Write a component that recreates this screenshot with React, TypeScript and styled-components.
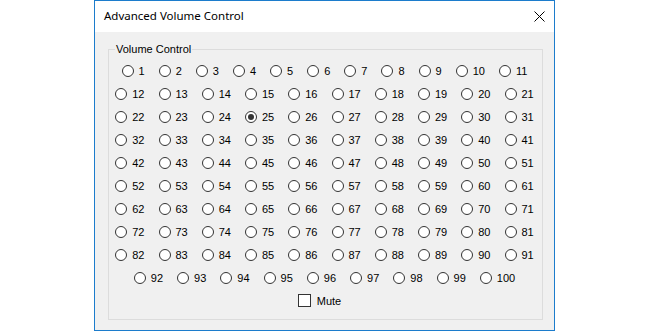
import React, { useState } from 'react'
import styled, { createGlobalStyle } from 'styled-components'

const GlobalStyle = createGlobalStyle`
  html, body {
    margin: 0;
    padding: 0;
    background: #ffffff;
  }
  body {
    width: 650px;
    height: 332px;
    overflow: hidden;
    font-family: "Liberation Sans", Arial, sans-serif;
  }
`

const buildRows = (): number[][] => {
  const rows: number[][] = []
  rows.push(Array.from({ length: 11 }, (_, i) => i + 1))
  for (let start = 12; start < 92; start += 10) {
    rows.push(Array.from({ length: 10 }, (_, i) => start + i))
  }
  rows.push(Array.from({ length: 9 }, (_, i) => 92 + i))
  return rows
}

const rows = buildRows()

const App: React.FC = () => {
  const [volume, setVolume] = useState(25)
  const [muted, setMuted] = useState(false)

  return (
    <>
      <GlobalStyle />
      <Page>
        <Window>
          <TitleBar>
            <Title>Advanced Volume Control</Title>
            <CloseButton aria-label="Close">
              <svg width="11" height="11" viewBox="0 0 11 11">
                <path d="M0.5 0.5 L10.5 10.5 M10.5 0.5 L0.5 10.5" stroke="#000" strokeWidth="1" fill="none" />
              </svg>
            </CloseButton>
          </TitleBar>
          <Body>
            <GroupBox>
              <Legend>Volume Control</Legend>
              <RadioGrid>
                {rows.map((row, r) => (
                  <RadioRow key={r}>
                    {row.map((n) => (
                      <RadioItem key={n} onClick={() => setVolume(n)}>
                        <RadioCircle $checked={volume === n} />
                        <ItemText>{n}</ItemText>
                      </RadioItem>
                    ))}
                  </RadioRow>
                ))}
              </RadioGrid>
              <MuteRow>
                <CheckItem onClick={() => setMuted(!muted)}>
                  <CheckBox $checked={muted} />
                  <ItemText>Mute</ItemText>
                </CheckItem>
              </MuteRow>
            </GroupBox>
          </Body>
        </Window>
      </Page>
    </>
  )
}

const Page = styled.div`
  display: flex;
  padding-left: 94px;
  height: 332px;
  box-sizing: border-box;
`

const Window = styled.div`
  width: 461px;
  height: 331px;
  box-sizing: border-box;
  border: 1px solid #1c7ccc;
  background: #f0f0f0;
  display: flex;
  flex-direction: column;
`

const TitleBar = styled.div`
  height: 31px;
  flex: none;
  background: #ffffff;
  display: flex;
  align-items: center;
  padding-left: 9px;
`

const Title = styled.div`
  flex: 1;
  font-family: "Segoe UI", "Noto Sans", sans-serif;
  font-size: 11.5px;
  line-height: 14px;
  margin-top: -2px;
  color: #000;
`

const CloseButton = styled.div`
  width: 30px;
  height: 31px;
  display: flex;
  align-items: center;
  justify-content: center;
`

const Body = styled.div`
  flex: 1;
  display: flex;
  padding: 10px 11px 10px 13px;
  min-height: 0;
`

const GroupBox = styled.fieldset`
  flex: 1;
  margin: 0;
  padding: 0 0 6px;
  min-width: 0;
  border: 1px solid #dcdcdc;
  display: flex;
  flex-direction: column;
`

const Legend = styled.legend`
  margin-left: 6px;
  padding: 0 1px;
  font-size: 11px;
  line-height: 14px;
  color: #000;
`

const RadioGrid = styled.div`
  display: flex;
  flex-direction: column;
  padding-top: 3px;
`

const RadioRow = styled.div<{ $first?: boolean }>`
  display: flex;
  justify-content: center;
  height: 23px;
`

const RadioItem = styled.label`
  display: inline-flex;
  align-items: center;
  gap: 5px;
  padding: 0 8px 0 6px;
  cursor: default;
`

const RadioCircle = styled.span<{ $checked: boolean }>`
  width: 12px;
  height: 12px;
  box-sizing: border-box;
  border-radius: 50%;
  border: 1px solid #333;
  background: #fff;
  display: flex;
  align-items: center;
  justify-content: center;
  &::after {
    content: '';
    width: 6px;
    height: 6px;
    border-radius: 50%;
    background: #333;
    display: ${(p) => (p.$checked ? 'block' : 'none')};
  }
`

const ItemText = styled.span`
  font-size: 11px;
  color: #000;
  white-space: nowrap;
`

const MuteRow = styled.div`
  display: flex;
  justify-content: center;
  align-items: center;
  height: 23px;
  padding-right: 12px;
`

const CheckItem = styled.label`
  display: inline-flex;
  align-items: center;
  gap: 6px;
`

const CheckBox = styled.span<{ $checked: boolean }>`
  width: 13px;
  height: 13px;
  box-sizing: border-box;
  border: 1px solid #333;
  background: #fff;
`

export default App
